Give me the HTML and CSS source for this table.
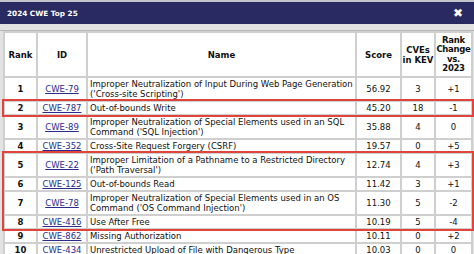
FILE: index.html
```html
<!DOCTYPE html>
<html>
<head>
<meta charset="utf-8">
<link rel="stylesheet" href="styles.css">
</head>
<body>
<div class="topline"></div>
<div class="bar">
  <span class="title">2024 CWE Top 25</span>
  <span class="close">✖</span>
</div>
<div class="gap"></div>
<div class="wrap">
<table class="cwe">
  <colgroup>
    <col class="c-rank"><col class="c-id"><col class="c-name"><col class="c-score"><col class="c-kev"><col class="c-chg">
  </colgroup>
  <thead>
    <tr class="head">
      <th>Rank</th><th>ID</th><th>Name</th><th>Score</th><th>CVEs<br>in KEV</th><th class="chg">Rank<br>Change<br>vs.<br>2023</th>
    </tr>
  </thead>
  <tbody>
    <tr><td class="rank">1</td><td class="id"><a href="#">CWE-79</a></td><td class="name">Improper Neutralization of Input During Web Page Generation ('Cross-site Scripting')</td><td class="num">56.92</td><td class="num">3</td><td class="num">+1</td></tr>
  </tbody>
  <tbody class="hl">
    <tr><td class="rank">2</td><td class="id"><a href="#">CWE-787</a></td><td class="name">Out-of-bounds Write</td><td class="num">45.20</td><td class="num">18</td><td class="num">-1</td></tr>
  </tbody>
  <tbody>
    <tr><td class="rank">3</td><td class="id"><a href="#">CWE-89</a></td><td class="name">Improper Neutralization of Special Elements used in an SQL Command ('SQL Injection')</td><td class="num">35.88</td><td class="num">4</td><td class="num">0</td></tr>
    <tr><td class="rank">4</td><td class="id"><a href="#">CWE-352</a></td><td class="name">Cross-Site Request Forgery (CSRF)</td><td class="num">19.57</td><td class="num">0</td><td class="num">+5</td></tr>
  </tbody>
  <tbody class="hl">
    <tr><td class="rank">5</td><td class="id"><a href="#">CWE-22</a></td><td class="name">Improper Limitation of a Pathname to a Restricted Directory ('Path Traversal')</td><td class="num">12.74</td><td class="num">4</td><td class="num">+3</td></tr>
    <tr><td class="rank">6</td><td class="id"><a href="#">CWE-125</a></td><td class="name">Out-of-bounds Read</td><td class="num">11.42</td><td class="num">3</td><td class="num">+1</td></tr>
    <tr><td class="rank">7</td><td class="id"><a href="#">CWE-78</a></td><td class="name">Improper Neutralization of Special Elements used in an OS Command ('OS Command Injection')</td><td class="num">11.30</td><td class="num">5</td><td class="num">-2</td></tr>
    <tr><td class="rank">8</td><td class="id"><a href="#">CWE-416</a></td><td class="name">Use After Free</td><td class="num">10.19</td><td class="num">5</td><td class="num">-4</td></tr>
  </tbody>
  <tbody>
    <tr><td class="rank">9</td><td class="id"><a href="#">CWE-862</a></td><td class="name">Missing Authorization</td><td class="num">10.11</td><td class="num">0</td><td class="num">+2</td></tr>
    <tr><td class="rank">10</td><td class="id"><a href="#">CWE-434</a></td><td class="name">Unrestricted Upload of File with Dangerous Type</td><td class="num">10.03</td><td class="num">0</td><td class="num">0</td></tr>
  </tbody>
</table>
</div>
</body>
</html>
```
FILE: styles.css
```css
html, body {
  margin: 0;
  padding: 0;
  background: #ffffff;
  width: 474px;
  height: 254px;
  overflow: hidden;
  font-family: "DejaVu Sans", Verdana, sans-serif;
  font-size: 8.5px;
  color: #111;
}
.topline {
  height: 2px;
  background: #c4c4cc;
}
.bar {
  height: 22px;
  background: #2a2a62;
  display: flex;
  align-items: center;
  justify-content: space-between;
  padding: 0 11px 0 7px;
  color: #fff;
  font-weight: bold;
}
.title {
  font-size: 7.3px;
}
.close {
  font-size: 12px;
  line-height: 12px;
}
.gap {
  height: 6px;
  background: #e2e2e2;
  border-bottom: 1px solid #b8b8b8;
}
.wrap {
  background: #e2e2e2;
  padding-left: 3px;
}
.cwe {
  border-collapse: collapse;
  table-layout: fixed;
  width: 468px;
  background: #fff;
}
.c-rank { width: 33px; }
.c-id { width: 50px; }
.c-name { width: 269px; }
.c-score { width: 45px; }
.c-kev { width: 34px; }
.c-chg { width: 37px; }
.cwe th, .cwe td {
  border: 2px solid #cfcfcf;
  padding: 1px 1px 1px;
  line-height: 10px;
  vertical-align: middle;
}
.cwe th {
  font-weight: bold;
  text-align: center;
  height: 43px;
  padding: 0;
}
.cwe th.chg {
  line-height: 9.5px;
  letter-spacing: -0.3px;
}
.cwe tbody.hl {
  outline: 2px solid #e0443a;
  outline-offset: 0;
}
.rank {
  text-align: center;
  font-weight: bold;
}
.id {
  text-align: center;
}
.id a {
  color: #2b2b8e;
  text-decoration: underline;
}
.cwe td.name {
  text-align: left;
  padding-left: 2px;
  padding-right: 0;
}
.num {
  text-align: center;
}
```
